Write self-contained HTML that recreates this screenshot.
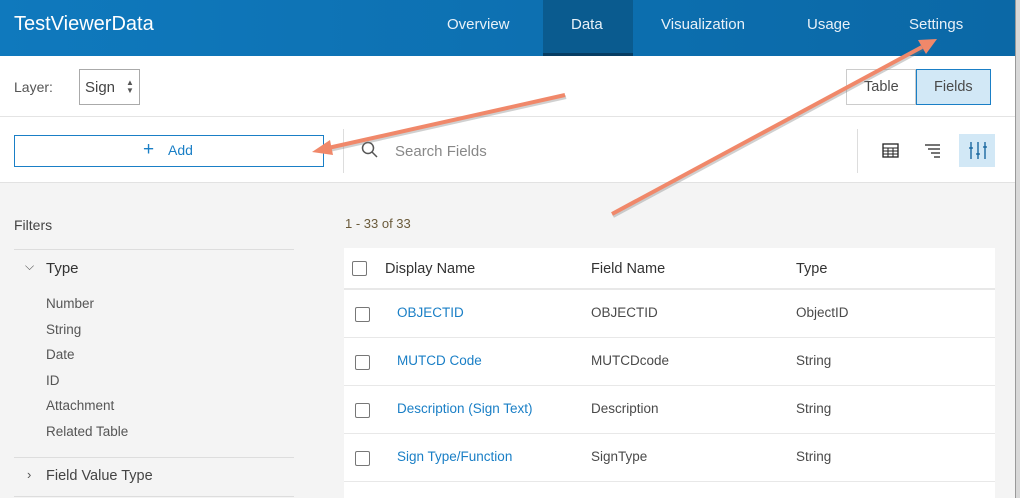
<!DOCTYPE html>
<html><head><meta charset="utf-8"><style>
*{box-sizing:border-box;margin:0;padding:0}
body{width:1020px;height:498px;overflow:hidden;font-family:"Liberation Sans",sans-serif;background:#f4f4f4;position:relative;color:#4a4a4a}
.a{position:absolute}
.hdr{left:0;top:0;width:1016px;height:56px;background:linear-gradient(90deg,#0f79bd,#0b68a6)}
.nav{color:#e8f1f8;font-size:15px;top:16px}
.t{font-size:14px}
.cb{width:15px;height:15px;border:1.5px solid #777;border-radius:2px;background:#fff}
.link{color:#1a7fc6}
</style></head><body>
<div class="a hdr"></div>
<div class="a" style="left:14px;top:13px;color:#fff;font-size:20px">TestViewerData</div>
<div class="a" style="left:543px;top:0;width:90px;height:56px;background:#0a5b8f;border-bottom:3px solid #063d63"></div>
<div class="a nav" style="left:447px">Overview</div>
<div class="a nav" style="left:571px">Data</div>
<div class="a nav" style="left:661px">Visualization</div>
<div class="a nav" style="left:807px">Usage</div>
<div class="a nav" style="left:909px">Settings</div>
<div class="a" style="left:1015px;top:0;width:5px;height:498px;background:#d8d8d8;border-left:1px solid #999"></div>

<div class="a" style="left:0;top:56px;width:1015px;height:61px;background:#fff;border-bottom:1px solid #e4e4e4"></div>
<div class="a t" style="left:14px;top:79px;color:#555">Layer:</div>
<div class="a" style="left:79px;top:69px;width:61px;height:36px;border:1px solid #aaa;background:#fff"></div>
<div class="a t" style="left:85px;top:79px;color:#444;font-size:15px">Sign</div>
<div class="a" style="left:126px;top:79px;font-size:8px;line-height:8px;color:#555">▲<br>▼</div>
<div class="a" style="left:846px;top:69px;width:70px;height:36px;border:1px solid #ccc;background:#fff"></div>
<div class="a t" style="left:864px;top:79px;font-size:14.5px">Table</div>
<div class="a" style="left:916px;top:69px;width:75px;height:36px;border:1px solid #1a7fc6;background:#d2e8f6"></div>
<div class="a t" style="left:934px;top:79px;font-size:14.5px">Fields</div>

<div class="a" style="left:0;top:117px;width:1015px;height:66px;background:#fff;border-bottom:1px solid #e2e2e2"></div>
<div class="a" style="left:14px;top:135px;width:310px;height:32px;border:1px solid #1a7fc6"></div>
<div class="a link" style="left:143px;top:139px;font-size:19px">+</div>
<div class="a link t" style="left:168px;top:142px">Add</div>
<div class="a" style="left:343px;top:129px;width:1px;height:44px;background:#ddd"></div>
<svg class="a" style="left:361px;top:141px" width="18" height="18"><circle cx="7" cy="7" r="5.5" fill="none" stroke="#555" stroke-width="1.5"/><line x1="11" y1="11" x2="16" y2="16" stroke="#555" stroke-width="1.5"/></svg>
<div class="a" style="left:395px;top:143px;font-size:15px;color:#888">Search Fields</div>
<div class="a" style="left:857px;top:129px;width:1px;height:44px;background:#ddd"></div>
<svg class="a" style="left:882px;top:143px" width="18" height="16"><rect x="1" y="1" width="15" height="13" fill="none" stroke="#222" stroke-width="1.3"/><path d="M1 5H16M1 8H16M1 11H16M6 5V14M11 5V14" stroke="#222" stroke-width="1"/></svg>
<svg class="a" style="left:924px;top:143px" width="18" height="16"><path d="M1 2H16M4 6H16M7 10H16M10 14H16" stroke="#222" stroke-width="1.2"/></svg>
<div class="a" style="left:959px;top:134px;width:36px;height:33px;background:#d2e8f6"></div>
<svg class="a" style="left:968px;top:141px" width="20" height="20"><path d="M3 1V18M10 1V18M17 1V18" stroke="#0d5f9a" stroke-width="1.3"/><path d="M1 7H5M8 13H12M15 6H19" stroke="#0d5f9a" stroke-width="1.3"/></svg>

<div class="a t" style="left:14px;top:217px;color:#444">Filters</div>
<div class="a" style="left:14px;top:249px;width:280px;height:1px;background:#ddd"></div>
<div class="a" style="left:25px;top:259px;font-size:12px;color:#555">⌵</div>
<div class="a t" style="left:46px;top:260px;color:#333;font-size:15px">Type</div>
<div class="a" style="left:46px;top:291px;font-size:13.5px;line-height:25.6px;color:#555">Number<br>String<br>Date<br>ID<br>Attachment<br>Related Table</div>
<div class="a" style="left:14px;top:457px;width:280px;height:1px;background:#ddd"></div>
<div class="a" style="left:27px;top:467px;font-size:13px;color:#555">›</div>
<div class="a t" style="left:46px;top:468px;color:#444;font-size:14.5px">Field Value Type</div>
<div class="a" style="left:14px;top:496px;width:280px;height:1px;background:#ddd"></div>

<div class="a" style="left:345px;top:216px;font-size:13px;color:#6a5a3a">1 - 33 of 33</div>
<div class="a" style="left:344px;top:248px;width:651px;height:250px;background:#fff"></div>
<div class="a" style="left:344px;top:288px;width:651px;height:2px;background:#e8e8e8"></div>
<div class="a cb" style="left:352px;top:261px"></div>
<div class="a t" style="left:385px;top:261px;color:#333;font-size:14.5px">Display Name</div>
<div class="a t" style="left:591px;top:261px;color:#333;font-size:14.5px">Field Name</div>
<div class="a t" style="left:796px;top:261px;color:#333;font-size:14.5px">Type</div>

<div class="a" style="left:344px;top:337px;width:651px;height:1px;background:#e8e8e8"></div>
<div class="a" style="left:344px;top:385px;width:651px;height:1px;background:#e8e8e8"></div>
<div class="a" style="left:344px;top:433px;width:651px;height:1px;background:#e8e8e8"></div>
<div class="a" style="left:344px;top:481px;width:651px;height:1px;background:#e8e8e8"></div>

<div class="a cb" style="left:355px;top:307px"></div>
<div class="a cb" style="left:355px;top:355px"></div>
<div class="a cb" style="left:355px;top:403px"></div>
<div class="a cb" style="left:355px;top:451px"></div>
<div class="a link" style="left:397px;top:305px;font-size:13.5px">OBJECTID</div>
<div class="a link" style="left:397px;top:353px;font-size:13.5px">MUTCD Code</div>
<div class="a link" style="left:397px;top:401px;font-size:13.5px">Description (Sign Text)</div>
<div class="a link" style="left:397px;top:449px;font-size:13.5px">Sign Type/Function</div>
<div class="a" style="left:591px;top:305px;font-size:13.5px">OBJECTID</div>
<div class="a" style="left:591px;top:353px;font-size:13.5px">MUTCDcode</div>
<div class="a" style="left:591px;top:401px;font-size:13.5px">Description</div>
<div class="a" style="left:591px;top:449px;font-size:13.5px">SignType</div>
<div class="a" style="left:796px;top:305px;font-size:13.5px">ObjectID</div>
<div class="a" style="left:796px;top:353px;font-size:13.5px">String</div>
<div class="a" style="left:796px;top:401px;font-size:13.5px">String</div>
<div class="a" style="left:796px;top:449px;font-size:13.5px">String</div>

<svg class="a" style="left:0;top:0" width="1020" height="498">
<g stroke="#777" stroke-opacity=".35" stroke-width="4" fill="#777" fill-opacity=".35" transform="translate(1,2)">
<line x1="565" y1="95" x2="328" y2="148"/><line x1="612" y1="214" x2="922" y2="47"/>
</g>
<g stroke="#f0886a" stroke-width="4" fill="#f0886a">
<line x1="565" y1="95" x2="328" y2="148"/>
<polygon stroke="none" points="312,152 330,140 333,155"/>
<line x1="612" y1="214" x2="922" y2="47"/>
<polygon stroke="none" points="937,39 918,40 926,54"/>
</g>
</svg>
</body></html>
